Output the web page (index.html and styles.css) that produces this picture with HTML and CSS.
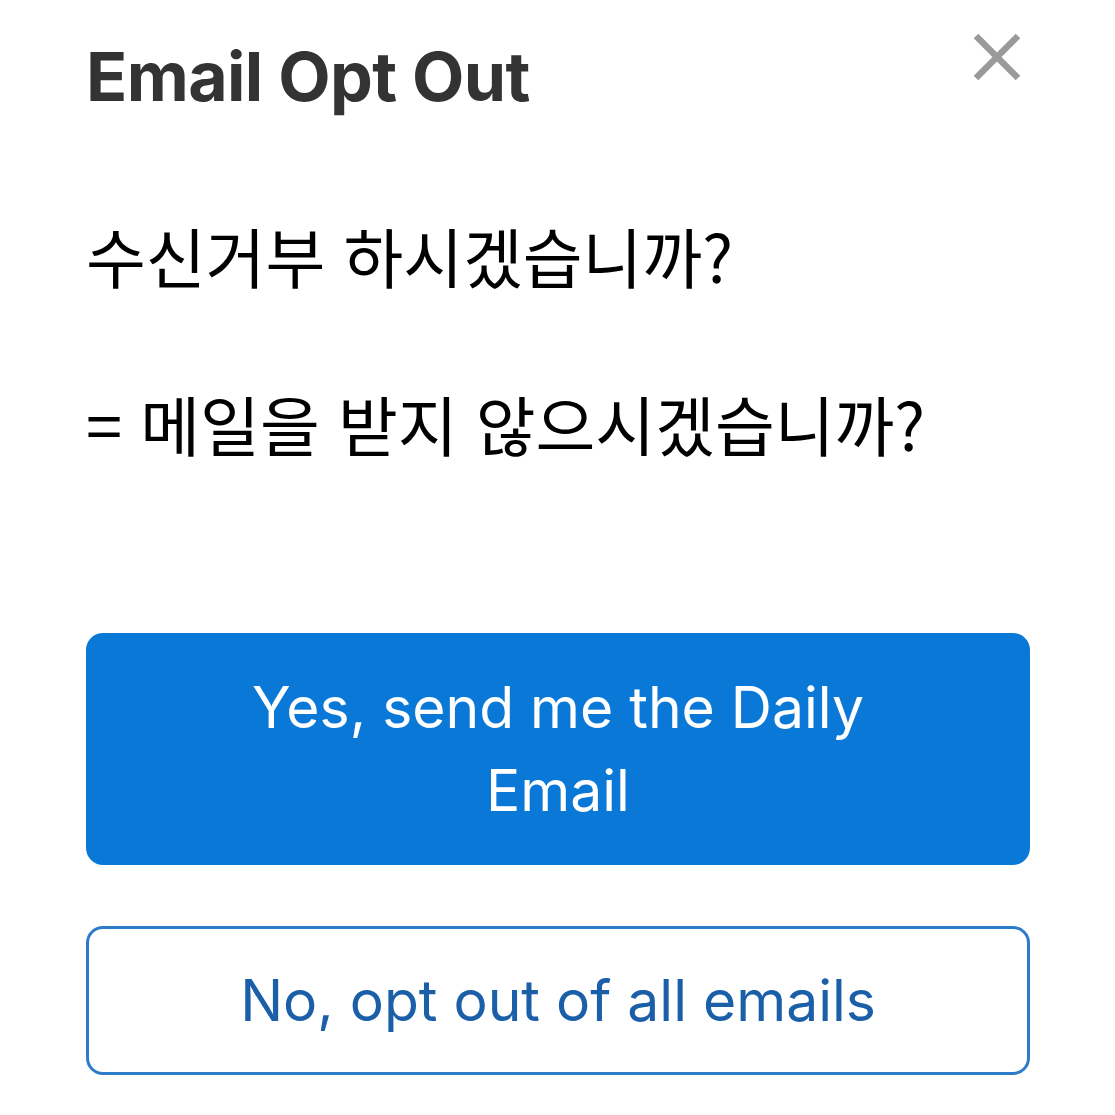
FILE: index.html
```html
<!DOCTYPE html>
<html lang="ko">
<head>
  <meta charset="UTF-8">
  <title>Email Opt Out</title>
  <link rel="stylesheet" href="styles.css">
</head>
<body>
  <!-- Opt-out dialog -->
  <div class="dialog">
    <div class="dialog-header">
      <h1 class="dialog-title">Email Opt Out</h1>
      <button class="close-btn" aria-label="Close">
        <svg viewBox="0 0 48 48" width="48" height="48">
          <path d="M3 3 L45 45 M45 3 L3 45" stroke="#9a9a9a" stroke-width="6.5" fill="none"/>
        </svg>
      </button>
    </div>

    <p class="question">수신거부 하시겠습니까?<br><br>= 메일을 받지 않으시겠습니까?</p>

    <div class="actions">
      <button class="btn btn-primary">Yes, send me the Daily Email</button>
      <button class="btn btn-outline">No, opt out of all emails</button>
    </div>
  </div>
</body>
</html>
```

FILE: styles.css
```css
/* Reset */
* {
  margin: 0;
  padding: 0;
  box-sizing: border-box;
}
body {
  font-family: Inter, "Noto Sans CJK KR", sans-serif;
  background: #ffffff;
  color: #000;
}
/* Dialog wrapper */
.dialog {
  padding: 36px 85px 0 86px;
}
.dialog-header {
  display: flex;
  justify-content: space-between;
  align-items: flex-start;
}
.dialog-title {
  font-size: 68px;
  font-weight: 700;
  color: #333333;
  letter-spacing: -0.6px;
  line-height: 1.2;
}
.close-btn {
  border: none;
  background: none;
  cursor: pointer;
  margin-top: -3px;
  margin-right: 9px;
}
.close-btn svg {
  display: block;
}
/* Question text */
.question {
  font-family: "Noto Sans CJK KR", sans-serif;
  font-size: 65px;
  line-height: 84px;
  margin-top: 95px;
}
/* Buttons */
.actions {
  display: flex;
  flex-direction: column;
  gap: 61px;
  margin-top: 168px;
}
.btn {
  width: 100%;
  font-family: Inter, sans-serif;
  font-size: 57px;
  line-height: 83px;
  border-radius: 17px;
  cursor: pointer;
  text-align: center;
}
.btn-primary {
  background: #0a78d7;
  color: #ffffff;
  border: none;
  padding: 33px 150px;
}
.btn-outline {
  background: #ffffff;
  color: #1a5fa8;
  border: 3px solid #2c7cc9;
  padding: 30px 20px;
}
```
